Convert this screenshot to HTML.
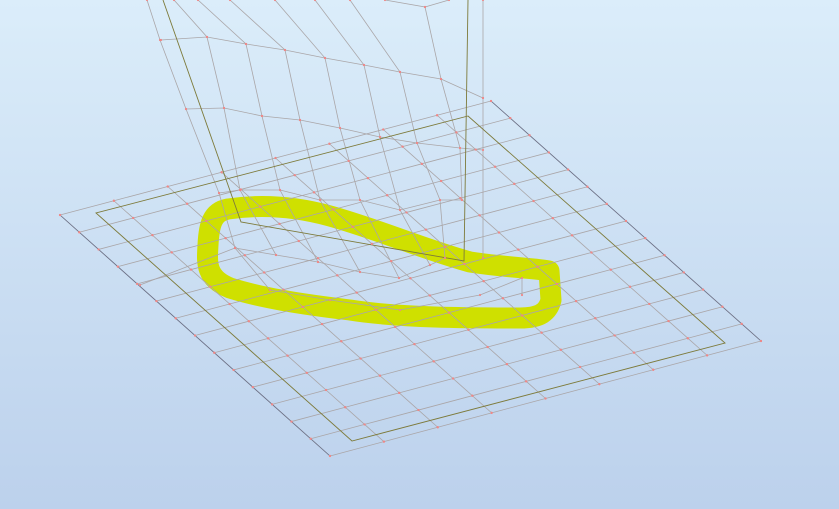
<!DOCTYPE html>
<html><head><meta charset="utf-8"><style>
html,body{margin:0;padding:0;width:839px;height:509px;overflow:hidden}
body{background:linear-gradient(#dbedfa,#bcd1ec)}
svg{position:absolute;left:0;top:0}
</style></head><body>
<svg id="s" width="839" height="509" viewBox="0 0 839 509" xmlns="http://www.w3.org/2000/svg">
<path d="M228,209 C255,205 290,205 330,216 C380,230 420,248 470,262 C510,268 535,268 549,271 L551,300 C548,312 540,318 520,318 C470,318 400,318 350,310 C300,304 262,298 230,288 C205,278 207,262 208,245 C209,225 212,212 228,209 Z" fill="none" stroke="#cfe000" stroke-width="21" stroke-linejoin="round"/>
<g id="g" fill="none" stroke="#aaa6a8" stroke-width="0.8"></g>
<g fill="none" stroke="#7d7a3a" stroke-width="0.9">
<path d="M163,0 L241,222 L464,261 L468,0"/>
<path d="M468,116 L96,213 L352,441 L725,343 Z"/>
</g>
<path d="M60,215 L330,456" stroke="#6a7088" stroke-width="0.8" fill="none"/>
<path d="M491,101 L761,341" stroke="#6a7088" stroke-width="0.8" fill="none"/>
<g id="d" fill="#e88"></g>
</svg>
<script>
var g=document.getElementById('g'),d=document.getElementById('d'),NS='http://www.w3.org/2000/svg';
function L(pts){var p=document.createElementNS(NS,'polyline');p.setAttribute('points',pts.map(function(a){return a.join(',')}).join(' '));g.appendChild(p);pts.forEach(function(a){var c=document.createElementNS(NS,'circle');c.setAttribute('cx',a[0]);c.setAttribute('cy',a[1]);c.setAttribute('r',1.1);d.appendChild(c);});}
function lerp(a,b,t){return [a[0]+(b[0]-a[0])*t,a[1]+(b[1]-a[1])*t];}
var T=[491,101],Lf=[60,215],B=[330,456],R=[761,341];
var n=14,m=8;
for(var i=0;i<=n;i++){var t=i/n;var a=lerp(Lf,B,t),b=lerp(T,R,t);var pts=[];for(var j=0;j<=m;j++)pts.push(lerp(a,b,j/m));L(pts);}
for(var j=0;j<=m;j++){var t=j/m;var a=lerp(Lf,T,t),b=lerp(B,R,t);var pts=[];for(var i=0;i<=n;i++)pts.push(lerp(a,b,i/n));L(pts);}
L([[147,0],[160,40],[186,109],[219,193],[235,248]]);
L([[174,0],[207,37],[224,108],[240,190],[276,255]]);
L([[198,0],[246,44],[262,116],[280,190],[318,262]]);
L([[230,0],[285,50],[300,120],[320,200],[360,272]]);
L([[275,0],[325,58],[340,128],[360,200],[399,278]]);
L([[315,0],[364,65],[380,137],[400,210],[430,265]]);
L([[350,0],[400,72],[417,143],[440,200],[445,258]]);
L([[385,0],[425,7],[441,79],[460,148],[462,200]]);
L([[449,0],[425,7]]);
L([[483,0],[483,98],[483,258]]);
L([[161,40],[207,37],[246,44],[285,50],[325,58],[364,65],[400,72],[441,79],[483,98]]);
L([[186,109],[224,108],[262,116],[300,120],[340,128],[380,137],[417,143],[460,148],[483,150]]);
L([[219,193],[240,190],[280,190],[320,200],[360,200],[400,210],[440,200],[462,200]]);
L([[235,248],[276,255],[318,262],[360,272],[399,278],[430,265],[445,258]]);
L([[140,285],[235,248],[270,290],[330,300],[400,310],[480,295],[522,278],[522,295]]);
</script>
</body></html>
